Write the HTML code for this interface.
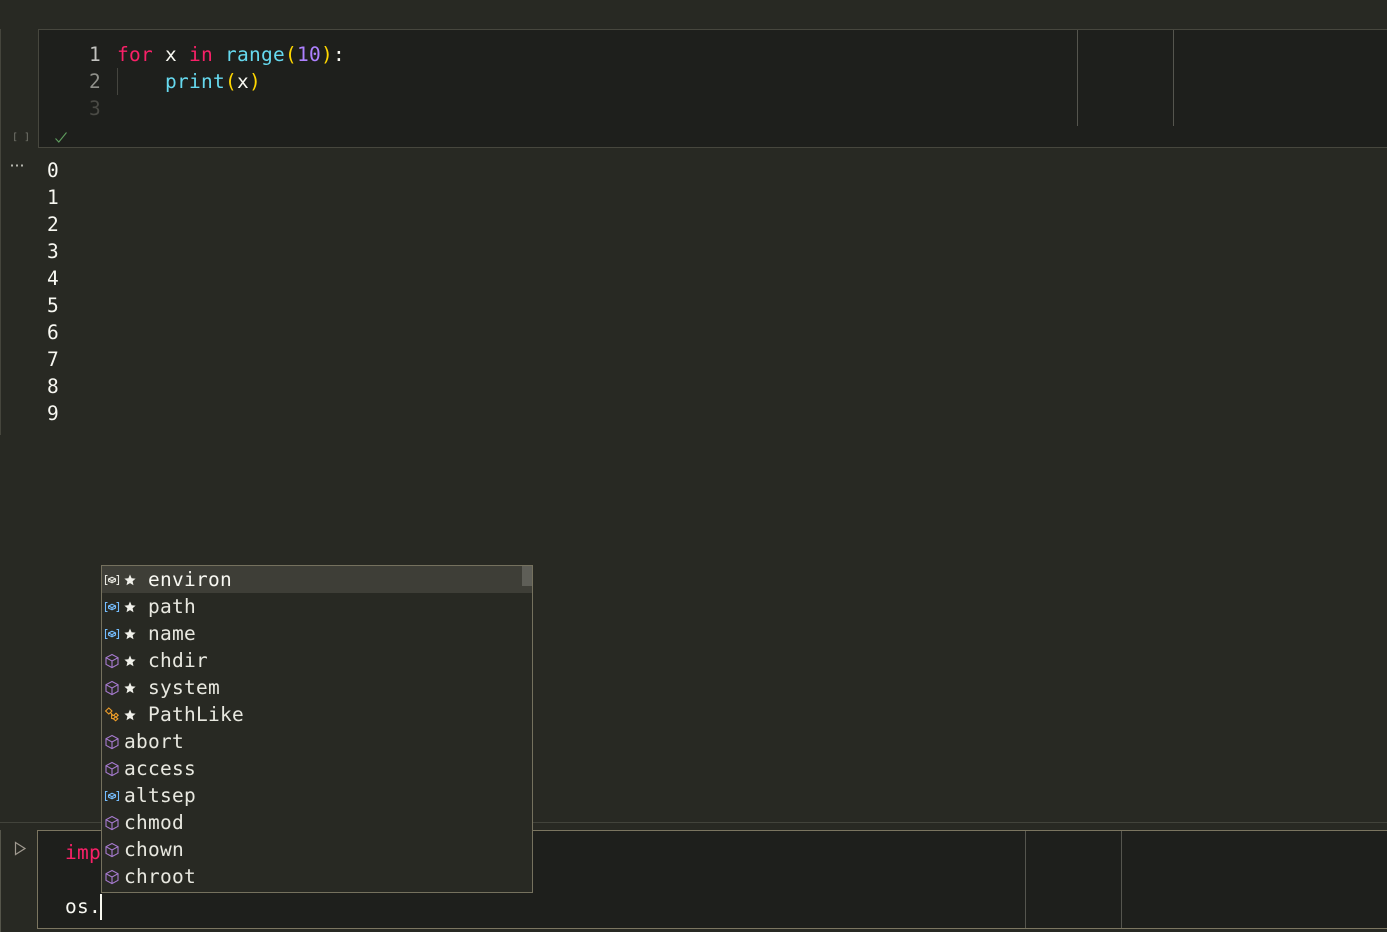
<!DOCTYPE html>
<html><head><meta charset="utf-8">
<style>
html,body{margin:0;padding:0;width:1387px;height:932px;overflow:hidden;background:#282923}
.a{position:absolute}
.t{position:absolute;font-family:"DejaVu Sans Mono","Liberation Mono",monospace;font-size:19.5px;letter-spacing:.26px;line-height:27px;height:27px;white-space:pre;color:#f8f8f2}
.k{color:#f92068}.f{color:#66d9ef}.p{color:#ffd700}.n{color:#ae81ff}
.s{position:absolute;left:124px;width:12px;height:12px}
.ic{position:absolute;left:104px;width:16px;height:16px}
</style></head><body>
<svg width="0" height="0" style="position:absolute"><defs>
<symbol id="star" viewBox="0 0 12 12"><polygon points="6,0.5 7.6,4.2 11.6,4.6 8.6,7.2 9.5,11.2 6,9.1 2.5,11.2 3.4,7.2 0.4,4.6 4.4,4.2" fill="#f0f0ea"/></symbol>
<symbol id="cube" viewBox="0 0 16 16"><path d="M8 1.5 14 4.7V11.3L8 14.6 2 11.3V4.7ZM2.2 4.8 8 8 13.8 4.8M8 8V14.4" fill="none" stroke="#a77bd0" stroke-width="1.1"/></symbol>
<symbol id="var" viewBox="0 0 16 16"><g fill="none" stroke="#75beff" stroke-width="1.1"><path d="M3.5 3.5H1.5V12.5H3.5M12.5 3.5H14.5V12.5H12.5"/><path d="M4.5 7 8 5.2 11.5 6.8V9L8 10.8 4.5 9.2ZM4.5 7 8 8.6 11.5 6.8M8 8.6V10.6"/></g></symbol>
<symbol id="varw" viewBox="0 0 16 16"><g fill="none" stroke="#e8e8e0" stroke-width="1.1"><path d="M3.5 3.5H1.5V12.5H3.5M12.5 3.5H14.5V12.5H12.5"/><path d="M4.5 7 8 5.2 11.5 6.8V9L8 10.8 4.5 9.2ZM4.5 7 8 8.6 11.5 6.8M8 8.6V10.6"/></g></symbol>
<symbol id="cls" viewBox="0 0 16 16"><g fill="none" stroke="#ee9d28" stroke-width="1.1"><path d="M4.8 1 8 4 4.8 7 1.6 4Z"/><path d="M6.6 5.6 8.8 8.4H10M7.6 7V11.4L10 11.8"/><path d="M12 6.2 14.2 8.2 12 10.2 9.8 8.2ZM11.6 9.8 13.8 11.8 11.6 13.8 9.4 11.8Z"/></g></symbol>
</defs></svg>

<!-- top cell -->
<div class="a" style="left:0;top:29px;width:1px;height:406px;background:#45453c"></div>
<div class="a" style="left:38px;top:29px;width:1349px;height:117px;background:#1e1f1c;border-top:1px solid #47473e;border-left:1px solid #47473e;border-bottom:1px solid #47473e"></div>
<div class="a" style="left:1077px;top:30px;width:1px;height:96px;background:#55554e"></div>
<div class="a" style="left:1173px;top:30px;width:1px;height:96px;background:#55554e"></div>
<div class="a" style="left:117px;top:68px;width:1px;height:27px;background:#45453f"></div>
<div class="t" style="left:89px;top:41px;color:#c2c2bf">1</div>
<div class="t" style="left:89px;top:68px;color:#8f908a">2</div>
<div class="t" style="left:89px;top:95px;color:#4a4a45">3</div>
<div class="t" style="left:117px;top:41px"><span class="k">for</span> x <span class="k">in</span> <span class="f">range</span><span class="p">(</span><span class="n">10</span><span class="p">)</span>:</div>
<div class="t" style="left:117px;top:68px">    <span class="f">print</span><span class="p">(</span>x<span class="p">)</span></div>
<div class="a" style="left:12px;top:132px;font:10px/12px 'DejaVu Sans Mono',monospace;color:#77776f;white-space:pre">[ ]</div>
<svg class="a" style="left:54px;top:131px" width="14" height="13" viewBox="0 0 14 13"><path d="M1.5 7.5 4.8 11 12.5 1.5" fill="none" stroke="#5f9e5f" stroke-width="1.1"/></svg>
<svg class="a" style="left:10px;top:163px" width="14" height="5"><rect x="1" y="1.5" width="2" height="2" fill="#b5b5ad"/><rect x="6" y="1.5" width="2" height="2" fill="#b5b5ad"/><rect x="11" y="1.5" width="2" height="2" fill="#b5b5ad"/></svg>

<!-- output -->
<div class="t" style="left:47px;top:157px">0</div>
<div class="t" style="left:47px;top:184px">1</div>
<div class="t" style="left:47px;top:211px">2</div>
<div class="t" style="left:47px;top:238px">3</div>
<div class="t" style="left:47px;top:265px">4</div>
<div class="t" style="left:47px;top:292px">5</div>
<div class="t" style="left:47px;top:319px">6</div>
<div class="t" style="left:47px;top:346px">7</div>
<div class="t" style="left:47px;top:373px">8</div>
<div class="t" style="left:47px;top:400px">9</div>

<!-- bottom cell -->
<div class="a" style="left:0;top:822px;width:1387px;height:1px;background:#42433b"></div>
<div class="a" style="left:0;top:830px;width:1px;height:102px;background:#55554a"></div>
<div class="a" style="left:37px;top:830px;width:1350px;height:97px;background:#1e1f1c;border-top:1px solid #7b7560;border-left:1px solid #7b7560;border-bottom:1px solid #7b7560"></div>
<div class="a" style="left:1025px;top:831px;width:1px;height:97px;background:#55554e"></div>
<div class="a" style="left:1121px;top:831px;width:1px;height:97px;background:#55554e"></div>
<svg class="a" style="left:14px;top:841px" width="13" height="15" viewBox="0 0 13 15"><path d="M1.5 1.5 11 7.5 1.5 13.5Z" fill="none" stroke="#a09a90" stroke-width="1.2"/></svg>
<div class="t k" style="left:65px;top:839px">import os</div>
<div class="t" style="left:65px;top:893px">os.</div>
<div class="a" style="left:100px;top:894px;width:2px;height:26px;background:#f8f8f0"></div>

<!-- suggest widget -->
<div class="a" style="left:101px;top:565px;width:430px;height:326px;background:#282923;border:1px solid #75715e;overflow:hidden"></div>
<div class="a" style="left:102px;top:566px;width:430px;height:27px;background:#3e3e37"></div>
<div class="a" style="left:522px;top:566px;width:10px;height:20px;background:#5e5e57"></div>

<svg class="ic" style="top:572px"><use href="#varw"/></svg>
<svg class="ic" style="top:599px"><use href="#var"/></svg>
<svg class="ic" style="top:626px"><use href="#var"/></svg>
<svg class="ic" style="top:653px"><use href="#cube"/></svg>
<svg class="ic" style="top:680px"><use href="#cube"/></svg>
<svg class="ic" style="top:707px"><use href="#cls"/></svg>
<svg class="ic" style="top:734px"><use href="#cube"/></svg>
<svg class="ic" style="top:761px"><use href="#cube"/></svg>
<svg class="ic" style="top:788px"><use href="#var"/></svg>
<svg class="ic" style="top:815px"><use href="#cube"/></svg>
<svg class="ic" style="top:842px"><use href="#cube"/></svg>
<svg class="ic" style="top:869px"><use href="#cube"/></svg>

<svg class="s" style="top:574px"><use href="#star"/></svg>
<svg class="s" style="top:601px"><use href="#star"/></svg>
<svg class="s" style="top:628px"><use href="#star"/></svg>
<svg class="s" style="top:655px"><use href="#star"/></svg>
<svg class="s" style="top:682px"><use href="#star"/></svg>
<svg class="s" style="top:709px"><use href="#star"/></svg>

<div class="t" style="left:148px;top:566px">environ</div>
<div class="t" style="left:148px;top:593px;color:#e8e8e0">path</div>
<div class="t" style="left:148px;top:620px;color:#e8e8e0">name</div>
<div class="t" style="left:148px;top:647px;color:#e8e8e0">chdir</div>
<div class="t" style="left:148px;top:674px;color:#e8e8e0">system</div>
<div class="t" style="left:148px;top:701px;color:#e8e8e0">PathLike</div>
<div class="t" style="left:124px;top:728px;color:#e8e8e0">abort</div>
<div class="t" style="left:124px;top:755px;color:#e8e8e0">access</div>
<div class="t" style="left:124px;top:782px;color:#e8e8e0">altsep</div>
<div class="t" style="left:124px;top:809px;color:#e8e8e0">chmod</div>
<div class="t" style="left:124px;top:836px;color:#e8e8e0">chown</div>
<div class="t" style="left:124px;top:863px;color:#e8e8e0">chroot</div>
</body></html>
